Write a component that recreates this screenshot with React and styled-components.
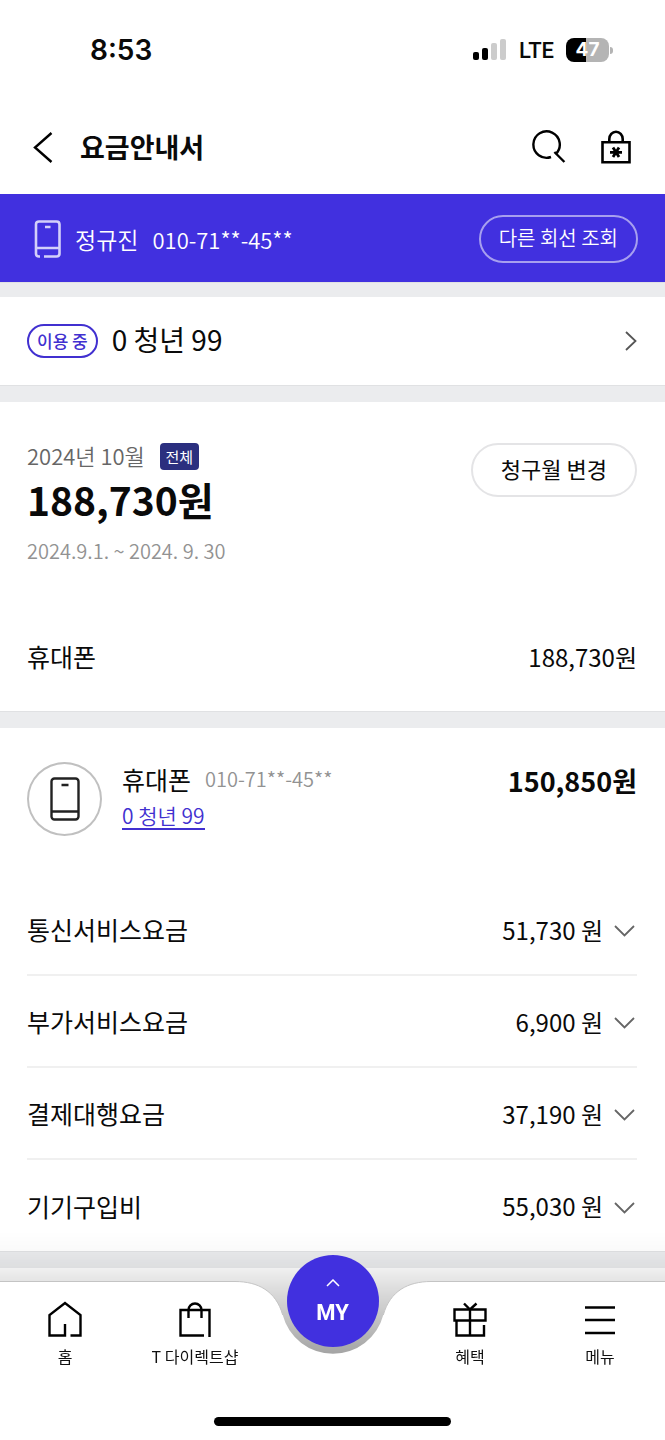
import React from 'react';
import styled, { createGlobalStyle } from 'styled-components';

const GlobalStyle = createGlobalStyle`
  * {
    box-sizing: border-box;
  }
  body {
    margin: 0;
    background-color: #ffffff;
    color: #0a0a0a;
    font-family: 'Noto Sans CJK KR', sans-serif;
  }
  button {
    font-family: inherit;
    color: inherit;
    padding: 0;
    border: none;
    background: none;
    cursor: pointer;
  }
  svg {
    display: block;
    flex: none;
  }
`;

const Page = styled.div`
  display: flex;
  flex-direction: column;
  min-height: 100vh;
  padding-bottom: 160px;
`;

const StatusBar = styled.div`
  display: flex;
  align-items: center;
  justify-content: space-between;
  height: 100px;
  padding: 0 52px 0 90px;
  font-family: Inter, sans-serif;
`;

const Clock = styled.span`
  font-size: 28px;
  font-weight: 600;
`;

const StatusIcons = styled.div`
  display: flex;
  align-items: center;
  gap: 12px;
`;

const Network = styled.span`
  font-family: Roboto, sans-serif;
  font-size: 22px;
  font-weight: 500;
`;

const Battery = styled.div`
  display: flex;
  align-items: center;
  gap: 1px;
`;

const BatteryBody = styled.div`
  width: 43px;
  height: 24px;
  border-radius: 8px;
  background: linear-gradient(to right, #000000 47%, #b4b4b4 47%);
  color: #ffffff;
  font-size: 19px;
  font-weight: 700;
  line-height: 24px;
  text-align: center;
`;

const BatteryTip = styled.div`
  width: 3px;
  height: 7px;
  border-radius: 0 3px 3px 0;
  background-color: #b4b4b4;
`;

const Header = styled.header`
  display: flex;
  align-items: center;
  height: 94px;
  padding: 0 34px 0 32px;
`;

const Title = styled.h1`
  flex: 1;
  margin: 0 0 0 27px;
  font-size: 27px;
  font-weight: 700;
  line-height: 40px;
`;

const HeaderActions = styled.div`
  display: flex;
  align-items: center;
  gap: 35px;
`;

const LineBar = styled.div`
  display: flex;
  align-items: center;
  height: 88px;
  padding: 2px 27px 0 34px;
  background-color: #4130df;
  color: #ffffff;
`;

const LineInfo = styled.div`
  display: flex;
  flex: 1;
  gap: 14px;
  margin-left: 13px;
  font-size: 23px;
  font-weight: 350;
  line-height: 34px;
`;

const LineNumber = styled.span`
  font-size: 22px;
`;

const PillButton = styled.button`
  height: ${(props) => (props.$large ? '54px' : '48px')};
  padding: ${(props) => (props.$large ? '0 28px 4px' : '0 18px 3px')};
  border: 2px solid ${(props) => (props.$large ? '#e4e4e6' : '#a79fef')};
  border-radius: 27px;
  font-size: ${(props) => (props.$large ? '22px' : '20px')};
  font-weight: ${(props) => (props.$large ? 400 : 350)};
`;

const Divider = styled.div`
  height: ${(props) => props.$height || 17}px;
  background-color: #ebecee;
  border-top: 1px solid #e0e1e3;
`;

const PlanRow = styled.button`
  display: flex;
  align-items: center;
  width: 100%;
  height: 88px;
  padding: 0 28px 0 27px;
`;

const UsingBadge = styled.span`
  height: 34px;
  padding: 0 8px;
  border: 2px solid #4130d0;
  border-radius: 17px;
  color: #4130d0;
  font-size: 17px;
  font-weight: 500;
  line-height: 29px;
`;

const PlanName = styled.span`
  flex: 1;
  margin-left: 14px;
  padding-bottom: 4px;
  font-size: 28px;
  line-height: 38px;
  text-align: left;
`;

const Section = styled.section`
  padding: ${(props) => props.$top}px 28px 0 27px;
`;

const BillTop = styled.div`
  display: flex;
  align-items: flex-start;
  justify-content: space-between;
`;

const BillMonth = styled.div`
  display: flex;
  align-items: center;
  gap: 15px;
  height: 27px;
  color: #666666;
  font-size: 22px;
  font-weight: 350;
  line-height: 24px;
`;

const MonthText = styled.span`
  padding-bottom: 4px;
`;

const AllTag = styled.span`
  width: 39px;
  border-radius: 4px;
  background-color: #2b2f7f;
  color: #ffffff;
  font-size: 15px;
  font-weight: 400;
  line-height: 27px;
  text-align: center;
`;

const BillTotal = styled.div`
  font-size: 39px;
  font-weight: 700;
  line-height: 58px;
`;

const BillPeriod = styled.div`
  margin-top: 8px;
  color: #929292;
  font-size: 20px;
  font-weight: 350;
  line-height: 30px;
`;

const Summary = styled.div`
  display: flex;
  justify-content: space-between;
  padding: 72px 0 36px;
  font-size: 25px;
  line-height: 37px;
`;

const Price = styled.span`
  font-size: 24px;
`;

const Device = styled.div`
  display: flex;
  align-items: flex-start;
  height: 122px;
`;

const DeviceIcon = styled.div`
  display: flex;
  align-items: center;
  justify-content: center;
  width: 75px;
  height: 74px;
  border: 2px solid #c0c0c0;
  border-radius: 50%;
`;

const DeviceInfo = styled.div`
  flex: 1;
  margin-left: 20px;
`;

const DeviceName = styled.div`
  display: flex;
  align-items: center;
  gap: 14px;
  font-size: 25px;
  line-height: 34px;
`;

const DeviceNumber = styled.span`
  color: #929292;
  font-size: 20px;
  font-weight: 350;
`;

const PlanLink = styled.a`
  display: inline-block;
  margin-top: 6px;
  border-bottom: 2px solid #4130d0;
  color: #4130d0;
  font-size: 21px;
  font-weight: 350;
  line-height: 26px;
  text-decoration: none;
`;

const DeviceTotal = styled.strong`
  font-size: 27px;
  font-weight: 700;
  line-height: 37px;
`;

const FeeRow = styled.button`
  display: flex;
  align-items: center;
  width: 100%;
  height: 92px;
  border-bottom: 2px solid #f0f0f0;
  font-size: 25px;

  svg {
    margin: 4px 0 0 10px;
  }

  &:last-child {
    height: 91px;
    border-bottom: none;
  }
`;

const FeeName = styled.span`
  flex: 1;
  text-align: left;
`;

const BottomBar = styled.nav`
  position: fixed;
  right: 0;
  bottom: 0;
  left: 0;
`;

const Shade = styled.div`
  position: absolute;
  top: -50px;
  right: 0;
  left: 0;
  height: 124px;
  background: linear-gradient(
    to bottom,
    rgba(0, 0, 0, 0) 0%,
    rgba(0, 0, 0, 0.02) 16%,
    rgba(0, 0, 0, 0.06) 30%,
    rgba(0, 0, 0, 0.12) 44%,
    rgba(0, 0, 0, 0.36) 100%
  );
`;

const BarShape = styled.div`
  position: absolute;
  inset: 0;
  display: flex;
`;

const BarSide = styled.div`
  flex: 1;
  border-top: 1px solid #c4c4c4;
  background-color: #ffffff;
`;

const Menu = styled.div`
  position: relative;
  display: grid;
  grid-template-columns: 130px 130px 1fr 130px 130px;
  height: 125px;
  padding-top: 20px;
`;

const MenuItem = styled.a`
  display: flex;
  flex-direction: column;
  align-items: center;
  color: #111111;
  font-size: 16px;
  line-height: 24px;
  text-decoration: none;
  white-space: nowrap;

  svg {
    margin-bottom: 7px;
  }
`;

const MySlot = styled.div`
  display: flex;
  justify-content: center;
`;

const MyButton = styled.button`
  display: flex;
  flex-direction: column;
  align-items: center;
  width: 92px;
  height: 92px;
  margin-top: -46px;
  padding-top: 24px;
  border-radius: 50%;
  background-color: #4130df;
  color: #ffffff;
  font-family: Roboto, sans-serif;
  font-size: 22px;
  font-weight: 700;
  line-height: 28px;

  svg {
    margin-bottom: 12px;
  }
`;

const HomeIndicator = styled.div`
  position: relative;
  height: 34px;
  padding-top: 11px;

  &::after {
    content: '';
    display: block;
    width: 237px;
    height: 9px;
    margin: 0 auto;
    border-radius: 5px;
    background-color: #000000;
  }
`;

const fees = [
  { name: '통신서비스요금', price: '51,730 원' },
  { name: '부가서비스요금', price: '6,900 원' },
  { name: '결제대행요금', price: '37,190 원' },
  { name: '기기구입비', price: '55,030 원' },
];

function SignalIcon() {
  return (
    <svg width="34" height="22" viewBox="0 0 34 22">
      <rect x="0" y="13" width="6" height="8" rx="2" fill="#000" />
      <rect x="9" y="9" width="6" height="12" rx="2" fill="#000" />
      <rect x="18" y="4" width="6" height="17" rx="2" fill="#ccc" />
      <rect x="27" y="0" width="6" height="21" rx="2" fill="#ccc" />
    </svg>
  );
}

function BackIcon() {
  return (
    <svg width="21" height="32" viewBox="0 0 21 32" fill="none" stroke="#000" strokeWidth="2.4">
      <path d="M19.5 2L3 16.5L19.5 31" />
    </svg>
  );
}

function SearchIcon() {
  return (
    <svg width="34" height="34" viewBox="0 0 34 34" fill="none" stroke="#000" strokeWidth="2.4">
      <path d="M19 27A13.2 13.2 0 1 1 23.6 24.2" />
      <path d="M22.4 22L32.4 32" />
    </svg>
  );
}

function LockIcon() {
  return (
    <svg width="30" height="34" viewBox="0 0 30 34" fill="none" stroke="#000" strokeWidth="2.6">
      <path d="M1.5 12.3H28.5V32.3H1.5Z" />
      <path d="M8.3 12V9A6.7 7.2 0 0 1 21.7 9V12" />
      <path d="M9 22.3H21M12 17.6L18 27M18 17.6L12 27" strokeWidth="2.8" />
    </svg>
  );
}

function LinePhoneIcon() {
  return (
    <svg width="28" height="38" viewBox="0 0 28 38" fill="none" stroke="#d3cffa" strokeWidth="2.6">
      <path d="M6 36.5H5Q2 36.5 2 33.5V4.5Q2 1.5 5 1.5H22.5Q25.5 1.5 25.5 4.5V33.5Q25.5 36.5 22.5 36.5H10" />
      <path d="M2 28H25.5M11 7H16.5" />
    </svg>
  );
}

function PhoneIcon() {
  return (
    <svg width="30" height="44" viewBox="0 0 30 44" fill="none" stroke="#222" strokeWidth="2.4">
      <rect x="1.5" y="1.5" width="27" height="41" rx="3" />
      <path d="M1.5 34.5H28.5M11.5 8H18.5" />
    </svg>
  );
}

function RightIcon() {
  return (
    <svg width="12" height="20" viewBox="0 0 12 20" fill="none" stroke="#555" strokeWidth="1.8">
      <path d="M1 1L10.5 10L1 19" />
    </svg>
  );
}

function DownIcon() {
  return (
    <svg width="24" height="12" viewBox="0 0 24 12" fill="none" stroke="#666" strokeWidth="1.8">
      <path d="M2 1L11.5 10.5L21 1" />
    </svg>
  );
}

function HomeIcon() {
  return (
    <svg width="36" height="36" viewBox="0 0 36 36" fill="none" stroke="#000" strokeWidth="2.4">
      <path d="M18 23V34.5H2.5V14L18 2L33.5 14V34.5H23.5" />
    </svg>
  );
}

function ShopIcon() {
  return (
    <svg width="36" height="36" viewBox="0 0 36 36" fill="none" stroke="#000" strokeWidth="2.4">
      <path d="M27 34.5H3.5V9H32.5V36" />
      <path d="M11.5 17V9A6.5 6.5 0 0 1 24.5 9V17" />
    </svg>
  );
}

function GiftIcon() {
  return (
    <svg width="36" height="36" viewBox="0 0 36 36" fill="none" stroke="#000" strokeWidth="2.4">
      <path d="M2.5 8.5H33.5V19.5H2.5ZM4.5 19.5V34.5H32V24" />
      <path d="M18 8.5V34.5M12 2.5L18 8.5L24.5 2.5" />
    </svg>
  );
}

function MenuIcon() {
  return (
    <svg width="36" height="36" viewBox="0 0 36 36" fill="none" stroke="#000" strokeWidth="2.4">
      <path d="M3 6.5H33M3 19H33M3 32H33" />
    </svg>
  );
}

function UpIcon() {
  return (
    <svg width="14" height="8" viewBox="0 0 14 8" fill="none" stroke="#fff" strokeWidth="1.5">
      <path d="M1 7L7 1L13 7" />
    </svg>
  );
}

// curved part of the bottom bar, the MY button sits in it
function Notch() {
  return (
    <svg width="210" height="159" viewBox="0 0 210 159">
      <path
        d="M0 0.5H7C30 0.5 48 10 54.7 34A52 52 0 0 0 155.3 34C162 10 180 0.5 203 0.5H210V159H0Z"
        fill="#fff"
      />
      <path d="M0 0.5H7C30 0.5 48 10 54.7 34M155.3 34C162 10 180 0.5 203 0.5H210" fill="none" stroke="#c4c4c4" />
    </svg>
  );
}

function App() {
  return (
    <>
      <GlobalStyle />
      <Page>
        <StatusBar>
          <Clock>8:53</Clock>
          <StatusIcons>
            <SignalIcon />
            <Network>LTE</Network>
            <Battery>
              <BatteryBody>47</BatteryBody>
              <BatteryTip />
            </Battery>
          </StatusIcons>
        </StatusBar>
        <Header>
          <button aria-label="뒤로"><BackIcon /></button>
          <Title>요금안내서</Title>
          <HeaderActions>
            <button aria-label="검색"><SearchIcon /></button>
            <button aria-label="잠금"><LockIcon /></button>
          </HeaderActions>
        </Header>
        <LineBar>
          <LinePhoneIcon />
          <LineInfo>
            <span>정규진</span>
            <LineNumber>010-71**-45**</LineNumber>
          </LineInfo>
          <PillButton>다른 회선 조회</PillButton>
        </LineBar>
        <Divider $height={15} />
        <PlanRow>
          <UsingBadge>이용 중</UsingBadge>
          <PlanName>0 청년 99</PlanName>
          <RightIcon />
        </PlanRow>
        <Divider />
        <Section $top={41}>
          <BillTop>
            <div>
              <BillMonth>
                <MonthText>2024년 10월</MonthText>
                <AllTag>전체</AllTag>
              </BillMonth>
              <BillTotal>188,730원</BillTotal>
              <BillPeriod>2024.9.1. ~ 2024. 9. 30</BillPeriod>
            </div>
            <PillButton $large>청구월 변경</PillButton>
          </BillTop>
          <Summary>
            <span>휴대폰</span>
            <Price>188,730원</Price>
          </Summary>
        </Section>
        <Divider />
        <Section $top={34}>
          <Device>
            <DeviceIcon><PhoneIcon /></DeviceIcon>
            <DeviceInfo>
              <DeviceName>
                휴대폰
                <DeviceNumber>010-71**-45**</DeviceNumber>
              </DeviceName>
              <PlanLink href="#plan">0 청년 99</PlanLink>
            </DeviceInfo>
            <DeviceTotal>150,850원</DeviceTotal>
          </Device>
          {fees.map((fee) => (
            <FeeRow key={fee.name}>
              <FeeName>{fee.name}</FeeName>
              <Price>{fee.price}</Price>
              <DownIcon />
            </FeeRow>
          ))}
        </Section>
        <Divider />
      </Page>
      <BottomBar>
        <Shade />
        <BarShape>
          <BarSide />
          <Notch />
          <BarSide />
        </BarShape>
        <Menu>
          <MenuItem href="#home"><HomeIcon />홈</MenuItem>
          <MenuItem href="#shop"><ShopIcon />T 다이렉트샵</MenuItem>
          <MySlot>
            <MyButton><UpIcon />MY</MyButton>
          </MySlot>
          <MenuItem href="#benefit"><GiftIcon />혜택</MenuItem>
          <MenuItem href="#menu"><MenuIcon />메뉴</MenuItem>
        </Menu>
        <HomeIndicator />
      </BottomBar>
    </>
  );
}

export default App;
